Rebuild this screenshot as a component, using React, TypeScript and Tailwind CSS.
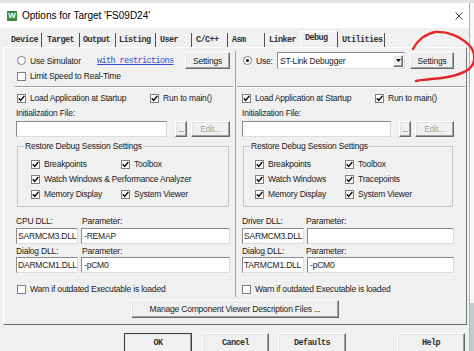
import React from "react";

const sans = "font-['Liberation_Sans',Arial,sans-serif]";
const mono = "font-['Liberation_Mono','Courier_New',monospace]";

const btn =
  "flex items-center justify-center whitespace-nowrap bg-[#f0f0f0] border border-t-white border-l-white border-r-[#696969] border-b-[#696969] shadow-[inset_-1px_-1px_0_#a0a0a0,inset_1px_1px_0_#e3e3e3]";
const field =
  "flex items-center whitespace-nowrap overflow-hidden bg-white border border-t-[#8a8a8a] border-l-[#8a8a8a] border-r-[#dcdcdc] border-b-[#dcdcdc]";

function Check({ on = false }: { on?: boolean }) {
  return (
    <span className="inline-flex h-[9px] w-[9px] shrink-0 items-center justify-center border border-[#7f7f7f] bg-white">
      {on && (
        <svg width="7" height="7" viewBox="0 0 7 7" className="block">
          <path d="M0.8 3.3 L2.7 5.4 L6.3 1.1" fill="none" stroke="#111" strokeWidth="1.5" />
        </svg>
      )}
    </span>
  );
}

function Radio({ on = false }: { on?: boolean }) {
  return (
    <span className="inline-flex h-[9px] w-[9px] shrink-0 items-center justify-center rounded-full border border-[#7f7f7f] bg-white">
      {on && <span className="h-[3px] w-[3px] rounded-full bg-black" />}
    </span>
  );
}

function CheckLabel({ on, label }: { on?: boolean; label: string }) {
  return (
    <div className="flex h-[12px] items-center gap-[4px] whitespace-nowrap">
      <Check on={on} />
      <span>{label}</span>
    </div>
  );
}

type ColProps = {
  side: "left" | "right";
  top: React.ReactNode;
  loadW: string;
  groupPl: string;
  rows: [string, string?][];
  dllLabel: string;
  dllW: string;
  dll1: string;
  param1: string;
  dll2: string;
  param2: string;
  sepCls: string;
  pad: string;
};

function Column(p: ColProps) {
  return (
    <div className={`flex flex-col pt-[4px] pb-[2px] ${p.pad}`}>
      {p.top}
      <div className={`mt-[4px] h-[2px] border-t border-b border-t-[#a0a0a0] border-b-white ${p.sepCls}`} />
      <div className={`mt-[4px] flex h-[12px] items-center ${p.side === "left" ? "pl-[1px]" : ""}`}>
        <div className={p.loadW}>
          <CheckLabel on label="Load Application at Startup" />
        </div>
        <CheckLabel on label="Run to main()" />
      </div>
      <div className="mt-[3px] h-[12px] leading-[12px]">Initialization File:</div>
      <div className="mt-[2px] flex h-[16px]">
        <div className={`${field} flex-1`} />
        <div className={`${btn} ml-[8px] w-[12px] text-[7px] leading-none`}>...</div>
        <div className={`${btn} ml-[4px] w-[39px] text-[#a3a3a3]`}>Edit...</div>
      </div>
      <fieldset className="mx-[1px] mt-[4px] border border-[#c6c6c6] px-[6px] pb-[6px]">
        <legend className="px-[1px] leading-[11px]">Restore Debug Session Settings</legend>
        <div className={`grid grid-cols-[90px_1fr] gap-y-[3px] pt-[6px] ${p.groupPl}`}>
          {p.rows.map(([a, b], i) =>
            b ? (
              <React.Fragment key={i}>
                <CheckLabel on label={a} />
                <CheckLabel on label={b} />
              </React.Fragment>
            ) : (
              <div key={i} className="col-span-2">
                <CheckLabel on label={a} />
              </div>
            )
          )}
        </div>
      </fieldset>
      <div className="mt-[8px] flex h-[12px] items-center whitespace-nowrap">
        <span className={p.dllW}>{p.dllLabel}</span>
        <span>Parameter:</span>
      </div>
      <div className="mt-[1px] flex h-[16px] gap-[3px]">
        <div className={`${field} w-[62px] pl-[1px]`}>{p.dll1}</div>
        <div className={`${field} flex-1 pl-[2px]`}>{p.param1}</div>
      </div>
      <div className="mt-[1px] flex h-[12px] items-center whitespace-nowrap">
        <span className={p.dllW}>Dialog DLL:</span>
        <span>Parameter:</span>
      </div>
      <div className="flex h-[16px] gap-[3px]">
        <div className={`${field} w-[62px] pl-[1px]`}>{p.dll2}</div>
        <div className={`${field} flex-1 pl-[2px]`}>{p.param2}</div>
      </div>
      <div className={`mt-[10px] ${p.side === "left" ? "pl-[1px]" : ""}`}>
        <CheckLabel label="Warn if outdated Executable is loaded" />
      </div>
    </div>
  );
}

const tabs: { label: string; w: string; pl: string; sep: boolean; active?: boolean }[] = [
  { label: "Device", w: "w-[37px]", pl: "pl-[6px]", sep: true },
  { label: "Target", w: "w-[38px]", pl: "pl-[5px]", sep: true },
  { label: "Output", w: "w-[36px]", pl: "pl-[3px]", sep: true },
  { label: "Listing", w: "w-[40px]", pl: "pl-[3px]", sep: true },
  { label: "User", w: "w-[36px]", pl: "pl-[4px]", sep: true },
  { label: "C/C++", w: "w-[36px]", pl: "pl-[4px]", sep: true },
  { label: "Asm", w: "w-[37px]", pl: "pl-[4px]", sep: true },
  { label: "Linker", w: "w-[35px]", pl: "pl-[4px]", sep: false },
  { label: "Debug", w: "w-[38px]", pl: "pl-[4px]", sep: true, active: true },
  { label: "Utilities", w: "w-[47px]", pl: "pl-[4px]", sep: true },
];

export default function App() {
  const leftTop = (
    <>
      <div className="flex h-[17px] items-center">
        <div className="flex w-[81px] items-center gap-[4px] pl-[1px] whitespace-nowrap">
          <Radio />
          <span>Use Simulator</span>
        </div>
        <span className={`${mono} text-[8.5px] tracking-[-0.6px] text-[#2d4fd2] underline`}>with restrictions</span>
        <div className={`${btn} ml-auto h-[17px] w-[45px]`}>Settings</div>
      </div>
      <div className="mt-[1px] pl-[1px]">
        <CheckLabel label="Limit Speed to Real-Time" />
      </div>
    </>
  );
  const rightTop = (
    <>
      <div className="flex h-[17px] items-center">
        <div className="flex w-[35px] items-center gap-[4px] pl-[1px] whitespace-nowrap">
          <Radio on />
          <span>Use:</span>
        </div>
        <div className={`${field} h-[17px] w-[128px]`}>
          <span className="flex-1 pl-[2px]">ST-Link Debugger</span>
          <span className={`${btn} mr-[1px] h-[12px] w-[10px]`}>
            <svg width="5" height="3" viewBox="0 0 5 3" className="block">
              <path d="M0 0 L5 0 L2.5 3 Z" fill="#000" />
            </svg>
          </span>
        </div>
        <div className={`${btn} ml-auto h-[17px] w-[44px]`}>Settings</div>
      </div>
      <div className="mt-[1px] h-[12px]" />
    </>
  );

  return (
    <div className={`relative flex h-[351px] w-[474px] flex-col overflow-hidden bg-[#f0f0f0] ${sans} text-[8.5px] leading-[12px] tracking-[-0.2px] text-[#1b1b1b]`}>
      <div className="h-[3px] shrink-0 bg-[#e2e2e2]" />
      <div className="flex flex-1">
        <div className="flex w-[470px] flex-col border-r border-r-[#b4b4b4]">
          {/* title bar */}
          <div className="flex h-[25px] shrink-0 items-center bg-white pl-[7px] pr-[6px]">
            <div className="flex h-[10px] w-[10px] items-center justify-center bg-[#3b8c3b] text-[8px] font-bold leading-none text-white">
              W
            </div>
            <span className="ml-[5px] text-[10px] tracking-normal text-black">Options for Target &apos;FS09D24&apos;</span>
            <svg width="8" height="8" viewBox="0 0 8 8" className="ml-auto block">
              <path d="M0.5 0.5 L7.5 7.5 M7.5 0.5 L0.5 7.5" stroke="#3a3a3a" strokeWidth="1" />
            </svg>
          </div>
          {/* tabs */}
          <div className={`flex h-[19px] shrink-0 items-end pl-[5px] ${mono} text-[8.5px] font-bold tracking-[-0.6px] text-[#333]`}>
            {tabs.map((t) =>
              t.active ? (
                <div
                  key={t.label}
                  className={`${t.w} ${t.pl} h-[16px] border-l border-r border-t border-l-white border-t-white border-r-[#505050] leading-[12px]`}
                >
                  {t.label}
                </div>
              ) : (
                <div
                  key={t.label}
                  className={`${t.w} ${t.pl} h-[14px] leading-[14px] ${t.sep ? "border-r border-r-[#505050]" : ""}`}
                >
                  {t.label}
                </div>
              )
            )}
          </div>
          {/* panel */}
          <div className="ml-[3px] flex w-[464px] shrink-0 flex-col border border-t-white border-l-white border-r-[#7a7a7a] border-b-[#6a6a6a] pb-[6px]">
            <div className="flex">
              <div className="w-[231px]">
                <Column
                  side="left"
                  pad="pl-[12px] pr-[5px]"
                  top={leftTop}
                  sepCls="-ml-[1px] -mr-[3px]"
                  loadW="w-[133px]"
                  groupPl="pl-[7px]"
                  rows={[["Breakpoints", "Toolbox"], ["Watch Windows & Performance Analyzer"], ["Memory Display", "System Viewer"]]}
                  dllLabel="CPU DLL:"
                  dllW="w-[66px]"
                  dll1="SARMCM3.DLL"
                  param1="-REMAP"
                  dll2="DARMCM1.DLL"
                  param2="-pCM0"
                />
              </div>
              <div className="mt-[3px] w-px bg-[#a0a0a0]" />
              <div className="w-[230px]">
                <Column
                  side="right"
                  pad="pl-[6px] pr-[12px]"
                  top={rightTop}
                  sepCls="-ml-[5px] -mr-[11px]"
                  loadW="w-[133px]"
                  groupPl="pl-[5px]"
                  rows={[["Breakpoints", "Toolbox"], ["Watch Windows", "Tracepoints"], ["Memory Display", "System Viewer"]]}
                  dllLabel="Driver DLL:"
                  dllW="w-[64px]"
                  dll1="SARMCM3.DLL"
                  param1=""
                  dll2="TARMCM1.DLL"
                  param2="-pCM0"
                />
              </div>
            </div>
            <div className={`${btn} mt-[3px] h-[18px] w-[208px] self-center`}>Manage Component Viewer Description Files ...</div>
          </div>
          {/* bottom buttons */}
          <div className={`mt-[8px] flex pl-[124px] ${mono} text-[8.5px] font-bold tracking-[-0.6px] text-[#333]`}>
            <div className={`${btn} h-[20px] w-[68px] outline outline-1 outline-[#3c3c3c] -outline-offset-1`}>OK</div>
            <div className={`${btn} ml-[10px] h-[20px] w-[67px]`}>Cancel</div>
            <div className={`${btn} ml-[9px] h-[20px] w-[68px]`}>Defaults</div>
            <div className={`${btn} ml-[51px] h-[20px] w-[68px]`}>Help</div>
          </div>
        </div>
        <div className="flex w-[4px] flex-col">
          <div className="h-[300px] bg-[#f7f7f7]" />
          <div className="flex-1 bg-[#c4c9cf]" />
        </div>
      </div>
      {/* red hand-drawn annotation */}
      <svg className="pointer-events-none absolute left-0 top-0" width="474" height="351" viewBox="0 0 474 351">
        <path
          d="M413 49 C417 41 425 34 435 32 C448 31 461 37 469 45 C476 52 476 63 469 69 C461 75 446 78 431 79 C425 80 420 80 416 81"
          fill="none"
          stroke="#e3262b"
          strokeWidth="2.4"
          strokeLinecap="round"
        />
      </svg>
    </div>
  );
}
